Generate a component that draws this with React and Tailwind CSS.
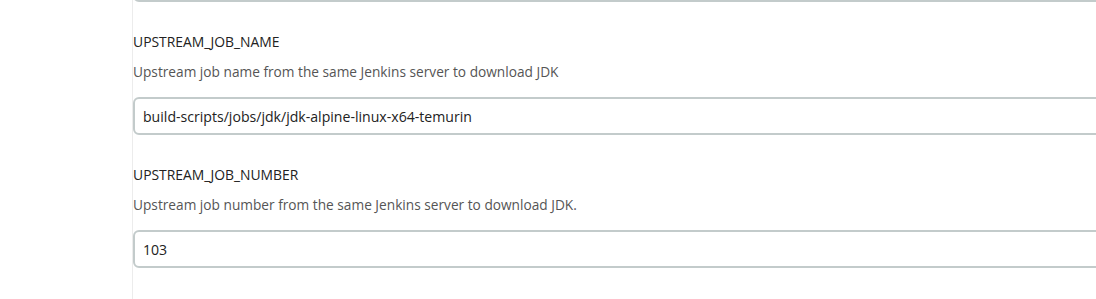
export default function App() {
  const fields = [
    {
      name: 'UPSTREAM_JOB_NAME',
      help: 'Upstream job name from the same Jenkins server to download JDK',
      value: 'build-scripts/jobs/jdk/jdk-alpine-linux-x64-temurin'
    },
    {
      name: 'UPSTREAM_JOB_NUMBER',
      help: 'Upstream job number from the same Jenkins server to download JDK.',
      value: '103'
    }
  ]

  return (
    <div className="flex h-[299px] w-full overflow-hidden bg-white font-['Open_Sans',sans-serif] text-[13.7px] text-[#333]">
      <div className="w-[133px] shrink-0 border-r border-[#ececec]" />
      <div className="min-w-0 flex-1">
        {/* bottom edge of the previous parameter's input */}
        <div className="mt-[-18px] h-[20px] w-[1000px] rounded-md border-2 border-[#c3cbcb]" />
        {fields.map((f) => (
          <div key={f.name} className="mt-[30px]">
            <div className="mb-[11px] text-[13.9px] leading-[19px] text-[#222]">{f.name}</div>
            <div className="mb-[15px] leading-[20px] text-[#555]">{f.help}</div>
            <input
              readOnly
              value={f.value}
              className="box-border block h-[38px] w-[1000px] rounded-md border-2 border-[#c3cbcb] bg-white px-[8px] text-[14.1px] leading-[20px] text-[#222] outline-none"
            />
          </div>
        ))}
      </div>
    </div>
  )
}
